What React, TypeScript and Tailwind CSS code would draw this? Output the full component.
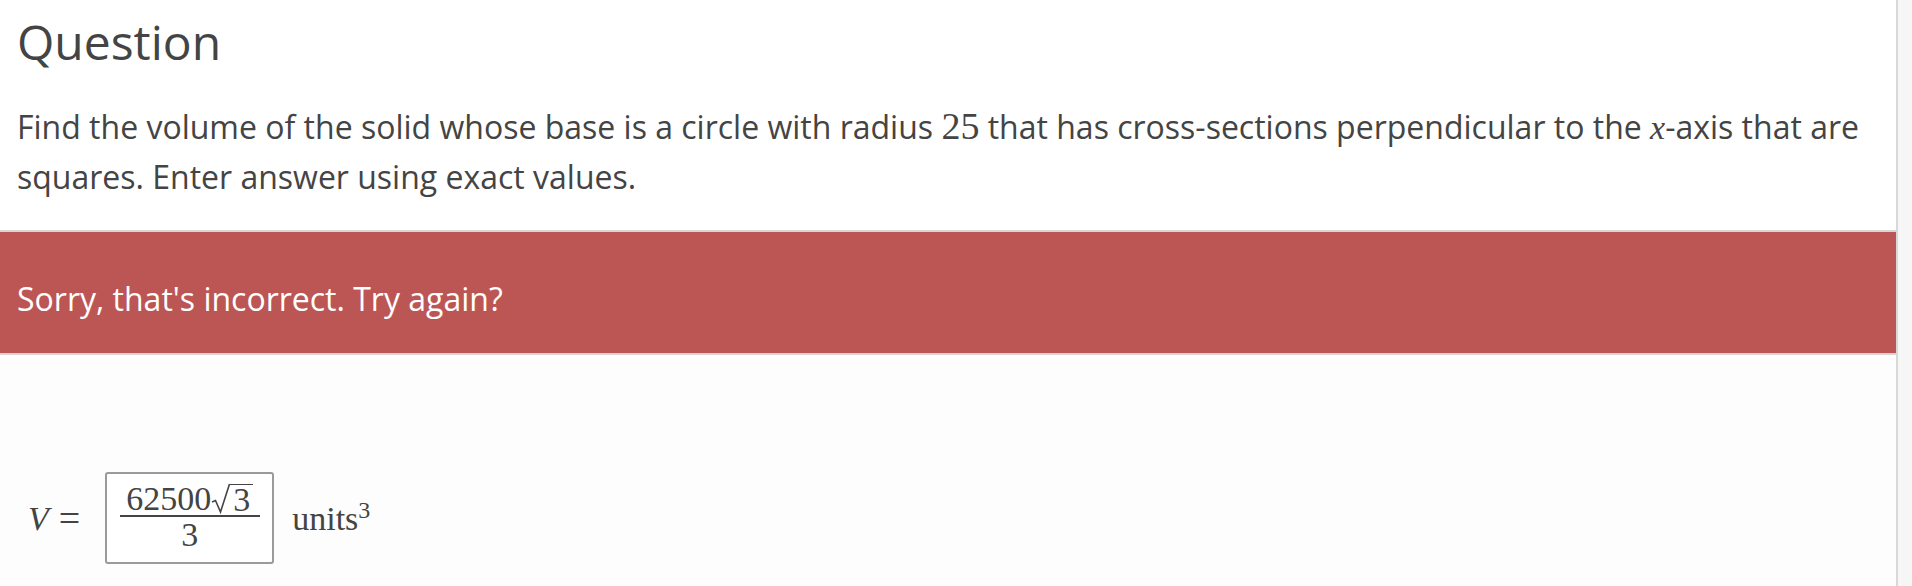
import React from 'react';

const Radical: React.FC<{ children: React.ReactNode }> = ({ children }) => (
  <span className="inline-flex items-end">
    <svg width="20" height="32" viewBox="0 0 20 32" className="block -mr-px">
      <path d="M1 19 L4.5 17.5 L9.5 29 L18.5 1" fill="none" stroke="#444" strokeWidth="1.6" />
    </svg>
    <span className="border-t-[1.5px] border-[#444] pl-[3px] pr-[3px] leading-[30px]">{children}</span>
  </span>
);

export default function App() {
  return (
    <div className="flex h-[586px] w-full overflow-hidden bg-[#f6f6f6] font-['Open_Sans',sans-serif] text-[#444]">
      <div className="flex w-[1898px] shrink-0 flex-col border-r-2 border-[#d8d8d8] bg-white">
        <div className="px-[17px] pt-[14px]">
          <h1 className="text-[48px] leading-[56px] font-normal text-[#444]">Question</h1>
          <p className="mt-[32px] text-[32px] leading-[50px] text-[#444]">
            Find the volume of the solid whose base is a circle with radius{' '}
            <span className="font-['Liberation_Serif',serif] text-[38px] leading-[0]">25</span> that has
            cross-sections perpendicular to the{' '}
            <span className="font-['Liberation_Serif',serif] text-[34px] italic leading-[0]">x</span>-axis that are
            squares. Enter answer using exact values.
          </p>
        </div>

        <div className="mt-[28px] border-y-2 border-[#d6d6d6]">
          <div className="flex h-[121px] items-center bg-[#bc5654] px-[17px] pt-[12px]">
            <span className="text-[32px] font-medium text-white">Sorry, that's incorrect. Try again?</span>
          </div>
        </div>

        <div className="flex-1 bg-[#fdfdfd] pl-[28px] pt-[117px]">
          <div className="flex items-center font-['Liberation_Serif',serif] text-[34px] text-[#444]">
            <span className="italic">V</span>
            <span className="ml-[10px] text-[38px]">=</span>
            <div className="ml-[25px] flex h-[92px] w-[169px] items-center justify-center rounded-[3px] border-2 border-[#9a9a9a] bg-white">
              <div className="flex flex-col items-center">
                <div className="flex items-end px-[2px] leading-[32px]">
                  <span>62500</span>
                  <Radical>3</Radical>
                </div>
                <div className="h-[2px] w-[140px] bg-[#444]" />
                <div className="leading-[36px]">3</div>
              </div>
            </div>
            <span className="ml-[18px]">
              units<sup className="text-[24px]">3</sup>
            </span>
          </div>
        </div>
      </div>
      <div className="flex-1" />
    </div>
  );
}
